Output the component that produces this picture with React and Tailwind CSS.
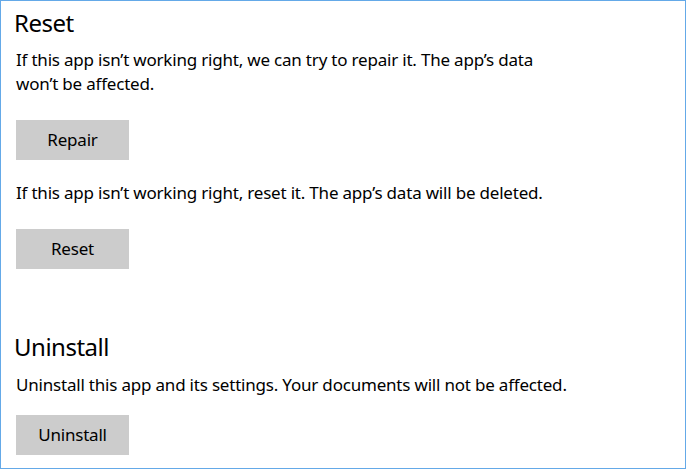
const Btn = ({ label }) => (
  <button className="w-[113px] h-[40px] bg-[#cccccc] text-[17px] tracking-[-0.2px] text-black">{label}</button>
);

export default function App() {
  return (
    <div className="w-[686px] h-[469px] border border-[#64a9e8] bg-white text-black font-['Noto_Sans',sans-serif] pl-[13px]">
      <h2 className="text-[24px] leading-[32px] tracking-[-0.5px] mt-[6px]">Reset</h2>
      <p className="text-[17px] leading-[24px] tracking-[-0.2px] w-[545px] mt-[9px] pl-[2px]">
        If this app isn’t working right, we can try to repair it. The app’s data won’t be affected.
      </p>
      <div className="mt-[24px] pl-[2px]"><Btn label="Repair" /></div>
      <p className="text-[17px] leading-[24px] tracking-[-0.2px] mt-[21px] pl-[2px]">
        If this app isn’t working right, reset it. The app’s data will be deleted.
      </p>
      <div className="mt-[24px] pl-[2px]"><Btn label="Reset" /></div>
      <h2 className="text-[24px] leading-[32px] tracking-[-0.5px] mt-[62px]">Uninstall</h2>
      <p className="text-[17px] leading-[24px] tracking-[-0.2px] mt-[10px] pl-[2px]">
        Uninstall this app and its settings. Your documents will not be affected.
      </p>
      <div className="mt-[18px] pl-[2px]"><Btn label="Uninstall" /></div>
    </div>
  );
}
